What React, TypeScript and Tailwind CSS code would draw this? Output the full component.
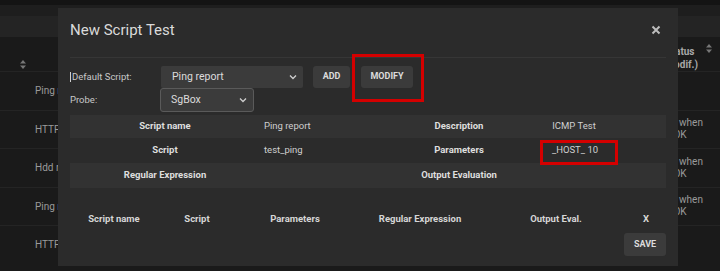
import React from "react";

function Chevron() {
	return (
		<svg width="8" height="6" viewBox="0 0 8 6" className="shrink-0">
			<path d="M1 1.5 L4 4.5 L7 1.5" fill="none" stroke="#cfcfcf" strokeWidth="1.3" />
		</svg>
	);
}

function SortIcon() {
	return (
		<svg width="6" height="9" viewBox="0 0 6 9">
			<path d="M3 0 L6 3.5 H0 Z" fill="#777" />
			<path d="M3 9 L6 5.5 H0 Z" fill="#777" />
		</svg>
	);
}

/* 背景のテーブル行 */
const bgRows = [
	{ name: "Ping r", status: "" },
	{ name: "HTTP", status: "when" },
	{ name: "Hdd r", status: "when" },
	{ name: "Ping r", status: "when" },
	{ name: "HTTP", status: "" },
];

export default function App() {
	return (
		<div className="relative w-[720px] h-[271px] overflow-hidden bg-[#1a1a1a] font-['Roboto','Liberation_Sans',sans-serif]">
			{/* background page */}
			<div className="h-[5px] bg-[#141414]" />
			<div className="h-[11px] bg-[#1e1e1e]" />
			<div className="h-[21px] bg-[#242424]" />
			<div className="flex h-[34px] items-end">
				<div className="w-[35px] flex justify-center pb-[2px] pl-[10px]">
					<SortIcon />
				</div>
				<div className="flex-1" />
				<div className="w-[52px] text-center text-[10px] leading-[13px] font-bold text-[#a8a8a8]">
					Status
					<br />
					(modif.)
				</div>
				<div className="w-[14px] flex items-start pt-[3px] h-full flex-col justify-center pb-[14px]">
					<SortIcon />
				</div>
			</div>
			{bgRows.map((r, i) => (
				<div
					key={i}
					className="flex h-[38.5px] items-center border-t border-[#242424] text-[10px] text-[#9a9a9a]"
				>
					<div className="w-[35px]" />
					<div className="flex-1">{r.name}</div>
					<div className="w-[52px] text-center leading-[12px] mr-[14px]">
						{r.status && (
							<>
								Only when
								<br />
								OK
							</>
						)}
					</div>
				</div>
			))}

			{/* modal */}
			<div className="absolute left-[58px] top-[8px] w-[620px] h-[258px] bg-[#2b2b2b] px-3 flex flex-col">
				<div className="h-[50px] border-b border-[#363636] flex items-start justify-between pt-[13px]">
					<div className="text-[15px] leading-[18px] text-[#dadada]">New Script Test</div>
					<svg width="10" height="10" viewBox="0 0 10 10" className="mt-[4px] mr-[5px]">
						<path d="M1.5 1.5 L8.5 8.5 M8.5 1.5 L1.5 8.5" stroke="#bdbdbd" strokeWidth="2" />
					</svg>
				</div>

				{/* form */}
				<div className="mt-[8px] flex items-center h-[22px]">
					<div className="w-[91px] flex items-center text-[9.5px] text-[#c8c8c8]">
						<span className="w-px h-[10px] bg-[#cfcfcf] mr-[1px]" />
						Default Script:
					</div>
					<div className="w-[142px] h-[22px] bg-[#3b3b3b] rounded-[2px] flex items-center justify-between pl-[11px] pr-[6px] text-[10.5px] text-[#dcdcdc]">
						Ping report
						<Chevron />
					</div>
					<button className="ml-[10px] w-[37px] h-[22px] bg-[#3b3b3b] rounded-[3px] text-[9px] font-bold text-[#dcdcdc]">
						ADD
					</button>
					<button className="ml-[11px] w-[52px] h-[22px] bg-[#3b3b3b] rounded-[3px] text-[9px] font-bold text-[#dcdcdc]">
						MODIFY
					</button>
				</div>
				<div className="flex items-center h-[24px]">
					<div className="w-[90px] text-[9.5px] text-[#c8c8c8]">Probe:</div>
					<div className="w-[94px] h-[24px] bg-[#3b3b3b] border-[1.5px] border-[#5a5a5a] rounded-[3px] flex items-center justify-between pl-[10px] pr-[6px] text-[10.5px] text-[#dcdcdc]">
						SgBox
						<Chevron />
					</div>
				</div>

				{/* detail table */}
				<div className="mt-[3px] text-[9.5px]">
					<div className="grid grid-cols-[190px_136px_126px_104px_1fr] h-[23px] items-center bg-[#323232]">
						<div className="text-center font-bold text-[#dedede]">Script name</div>
						<div className="pl-[4px] text-[#cfcfcf]">Ping report</div>
						<div className="text-center font-bold text-[#dedede]">Description</div>
						<div className="text-center text-[#cfcfcf]">ICMP Test</div>
						<div />
					</div>
					<div className="grid grid-cols-[190px_136px_126px_104px_1fr] h-[25px] items-center">
						<div className="text-center font-bold text-[#dedede]">Script</div>
						<div className="pl-[4px] text-[#cfcfcf]">test_ping</div>
						<div className="text-center font-bold text-[#dedede]">Parameters</div>
						<div className="text-center text-[#cfcfcf] pl-[2px]">_HOST_ 10</div>
						<div />
					</div>
					<div className="grid grid-cols-[190px_136px_126px_104px_1fr] h-[25px] items-center bg-[#323232]">
						<div className="text-center font-bold text-[#dedede]">Regular Expression</div>
						<div />
						<div className="text-center font-bold text-[#dedede]">Output Evaluation</div>
						<div />
						<div />
					</div>
				</div>

				{/* list header */}
				<div className="mt-[19px] grid grid-cols-[88px_78px_118px_132px_140px_1fr] h-[24px] items-center text-[9.5px] font-bold text-[#d6d6d6]">
					<div className="text-center">Script name</div>
					<div className="text-center">Script</div>
					<div className="text-center">Parameters</div>
					<div className="text-center">Regular Expression</div>
					<div className="text-center">Output Eval.</div>
					<div className="text-center">X</div>
				</div>
				<div className="mt-[2px] flex justify-end">
					<button className="w-[42px] h-[23px] bg-[#3b3b3b] rounded-[3px] text-[9px] font-bold text-[#dcdcdc]">
						SAVE
					</button>
				</div>

				{/* annotations */}
				<div className="absolute left-[294px] top-[46px] w-[72px] h-[48px] border-[3px] border-[#d40000]" />
				<div className="absolute left-[482px] top-[132px] w-[78px] h-[25px] border-[3px] border-[#d40000]" />
			</div>
		</div>
	);
}
